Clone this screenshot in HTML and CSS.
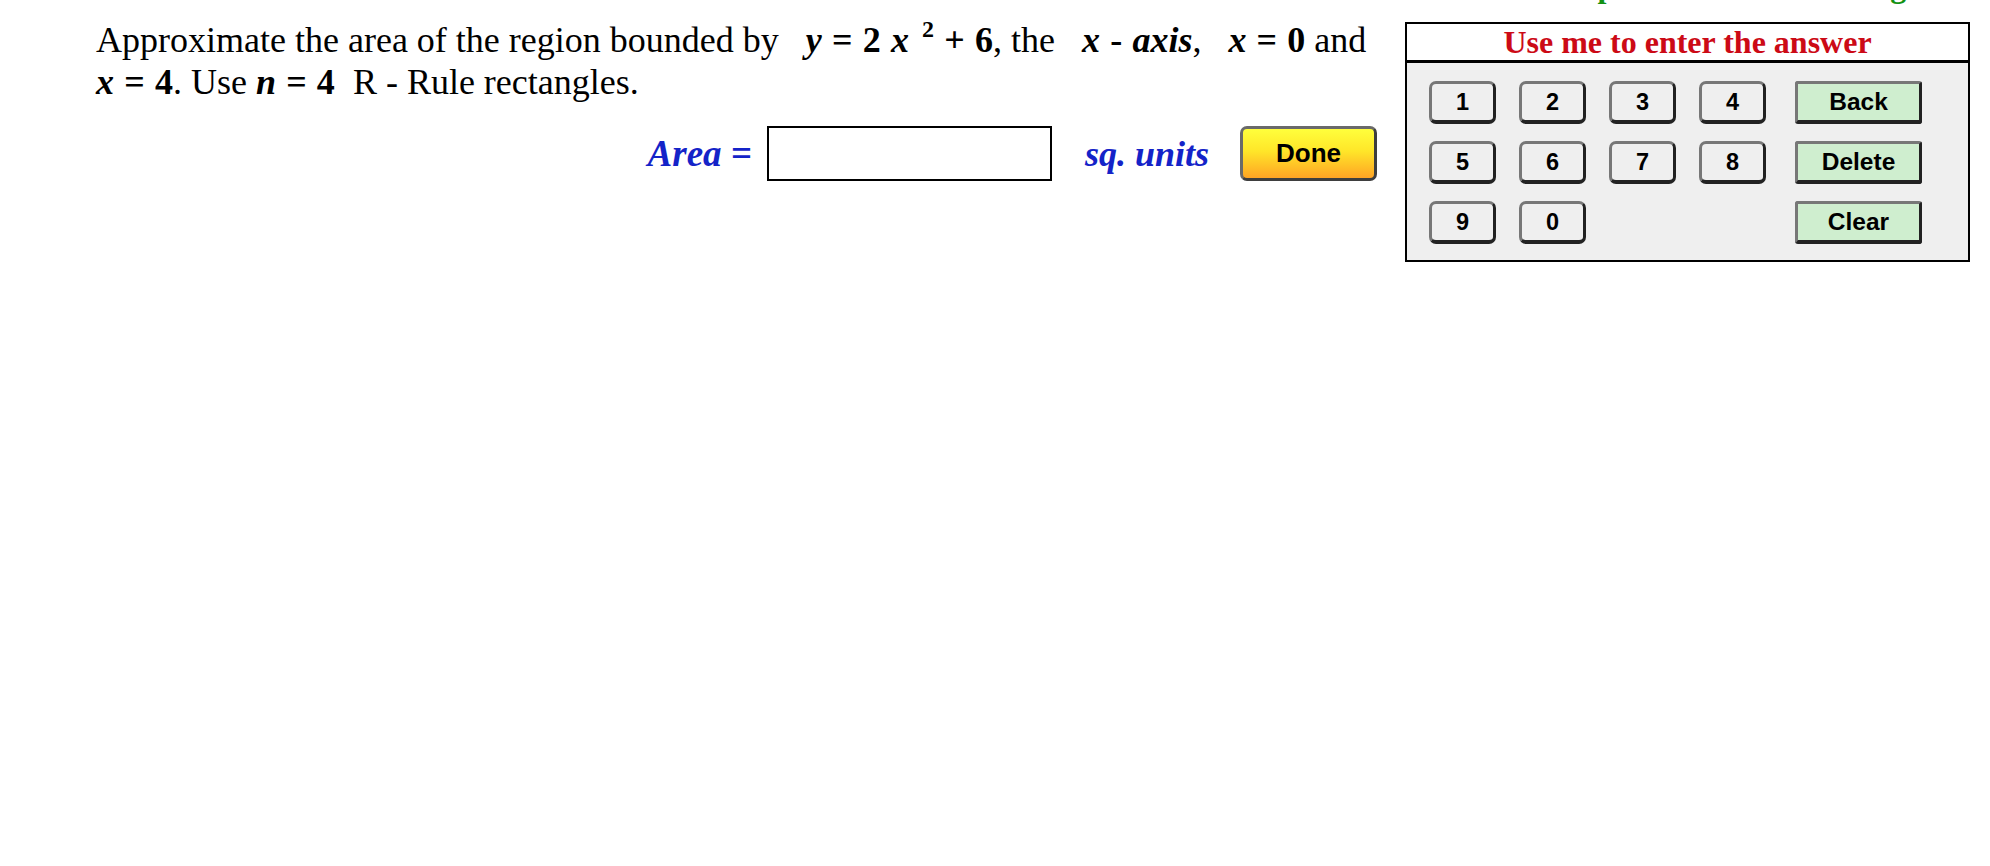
FILE: index.html
```html
<!DOCTYPE html>
<html lang="en">
<head>
<meta charset="utf-8">
<title>Riemann sum question</title>
<link rel="stylesheet" href="styles.css">
</head>
<body>
<div class="page">
  <div class="question-col">
    <p class="question">Approximate the area of the region bounded by &nbsp; <span class="mb nw"><span class="mi">y</span> = 2 <span class="mi">x</span> <sup class="sup">2</sup> + 6</span>, the &nbsp; <span class="mb nw"><span class="mi">x</span> - <span class="mi">axis</span></span>, &nbsp; <span class="mb nw"><span class="mi">x</span> = 0</span> and <span class="mb nw"><span class="mi">x</span> = 4</span>. Use <span class="mb nw"><span class="mi">n</span> = 4</span>&nbsp; R - Rule rectangles.</p>
    <div class="answer-row">
      <span class="blue-label">Area =</span>
      <div class="answer-box"></div>
      <span class="blue-label units">sq. units</span>
      <button class="done-btn">Done</button>
    </div>
  </div>
  <div class="keypad-col">
    <div class="clip-title"><div class="clip-inner">Tap the number to change</div></div>
    <div class="keypad">
      <div class="keypad-head">Use me to enter the answer</div>
      <div class="keypad-body">
        <button class="key">1</button>
        <button class="key">2</button>
        <button class="key">3</button>
        <button class="key">4</button>
        <button class="key action">Back</button>
        <button class="key">5</button>
        <button class="key">6</button>
        <button class="key">7</button>
        <button class="key">8</button>
        <button class="key action">Delete</button>
        <button class="key">9</button>
        <button class="key">0</button>
        <span class="key-gap"></span>
        <span class="key-gap"></span>
        <button class="key action">Clear</button>
      </div>
    </div>
  </div>
</div>
</body>
</html>
```

FILE: styles.css
```css
html, body {
  margin: 0;
  padding: 0;
  background: #ffffff;
}

.page {
  display: flex;
  align-items: flex-start;
  width: 1990px;
}

.question-col {
  width: 1284px;
  padding: 19px 0 0 96px;
}

.question {
  margin: 0;
  font-family: "Liberation Serif", "Times New Roman", serif;
  font-size: 36px;
  line-height: 42px;
  color: #000;
}

.mb {
  font-weight: bold;
  word-spacing: 1.2px;
}

.nw {
  white-space: nowrap;
}

.mi {
  font-style: italic;
  font-weight: bold;
}

.sup {
  font-size: 24px;
  line-height: 0;
  vertical-align: 15px;
  margin-left: 3px;
}

.answer-row {
  display: flex;
  justify-content: flex-end;
  align-items: center;
  margin-top: 23px;
  padding-right: 3px;
}

.blue-label {
  font-family: "Liberation Serif", "Times New Roman", serif;
  font-size: 37px;
  font-weight: bold;
  font-style: italic;
  color: #1423c8;
}

.answer-box {
  box-sizing: border-box;
  width: 285px;
  height: 55px;
  border: 2px solid #000;
  background: #fff;
  margin-left: 15px;
}

.blue-label.units {
  margin-left: 33px;
  font-size: 36px;
}

.done-btn {
  box-sizing: border-box;
  width: 137px;
  height: 55px;
  margin-left: 31px;
  border: 3px solid #3e3e3e;
  border-top-color: #6a6a6a;
  border-left-color: #6a6a6a;
  border-radius: 7px;
  background: linear-gradient(#ffff3c, #ffe629 45%, #ffa424);
  font-family: "Liberation Sans", Arial, sans-serif;
  font-size: 26px;
  font-weight: bold;
  color: #000;
  padding: 0;
}

.keypad-col {
  width: 565px;
  margin-left: 25px;
}

.clip-title {
  height: 22px;
  overflow: hidden;
  padding-left: 158px;
}

.clip-inner {
  margin-top: -30px;
  font-family: "Liberation Serif", "Times New Roman", serif;
  font-size: 32px;
  line-height: 32px;
  font-weight: bold;
  color: #139113;
  white-space: nowrap;
}

.keypad {
  box-sizing: border-box;
  width: 565px;
  border: 2px solid #000;
  background: #efefef;
}

.keypad-head {
  height: 36px;
  background: #fff;
  border-bottom: 3px solid #000;
  text-align: center;
  font-family: "Liberation Serif", "Times New Roman", serif;
  font-size: 32px;
  font-weight: bold;
  line-height: 36px;
  color: #cc0a16;
}

.keypad-body {
  display: grid;
  grid-template-columns: repeat(4, 67px) 127px;
  grid-auto-rows: 43px;
  column-gap: 23px;
  row-gap: 17px;
  padding: 18px 0 16px 22px;
}

.key {
  box-sizing: border-box;
  margin: 0;
  padding: 0;
  border: 3px solid #222;
  border-top-color: #777;
  border-left-color: #777;
  border-bottom-width: 4px;
  border-radius: 7px;
  background: #efefef;
  font-family: "Liberation Sans", Arial, sans-serif;
  font-size: 23.5px;
  font-weight: bold;
  color: #000;
}

.key.action {
  margin-left: 6px;
  width: 127px;
  border-radius: 3px;
  background: #cfeecf;
  font-size: 24.5px;
}
```
